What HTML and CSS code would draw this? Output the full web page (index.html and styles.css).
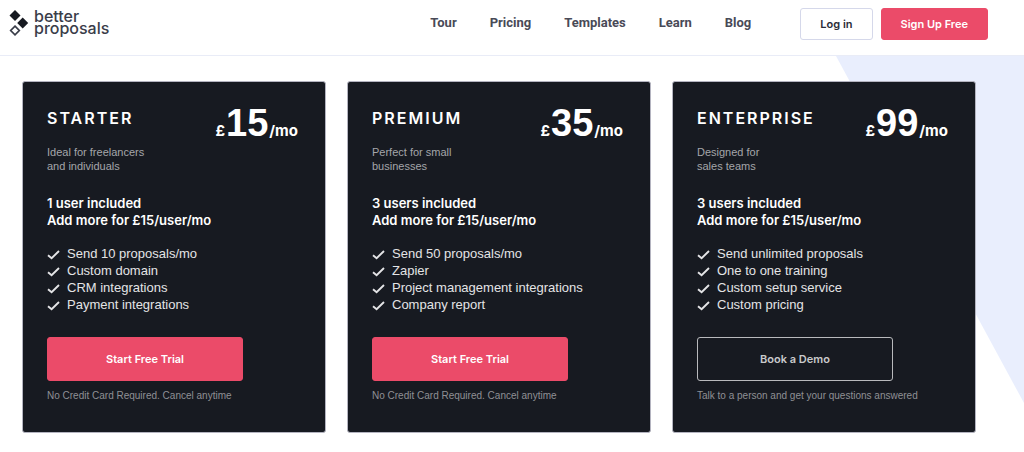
FILE: index.html
```html
<!DOCTYPE html>
<html lang="en">
<head>
<meta charset="utf-8">
<meta name="viewport" content="width=device-width, initial-scale=1">
<title>Better Proposals – Pricing</title>
<link rel="stylesheet" href="styles.css">
</head>
<body>
<svg class="sprite" aria-hidden="true">
  <symbol id="check" viewBox="0 0 13 11"><path d="M1 6.2 4.6 9.2 12 2" fill="none" stroke="currentColor" stroke-width="1.9"/></symbol>
</svg>
<header class="header">
  <a class="logo" href="#" aria-label="Better Proposals">
    <svg class="logo-mark" viewBox="0 0 20 26" aria-hidden="true">
      <path d="M6 0 11.5 5.5 6 11 .5 5.5Z" fill="#171a21"/>
      <path d="M13.7 7.5 19.2 13 13.7 18.5 8.2 13Z" fill="#171a21"/>
      <path d="M6 16.2 10.3 20.5 6 24.8 1.7 20.5Z" fill="none" stroke="#3a3d49" stroke-width="1.7"/>
    </svg>
    <span class="logo-text">better<br>proposals</span>
  </a>
  <nav class="nav">
    <a href="#">Tour</a>
    <a href="#">Pricing</a>
    <a href="#">Templates</a>
    <a href="#">Learn</a>
    <a href="#">Blog</a>
  </nav>
  <div class="account">
    <button class="btn btn-login" type="button">Log in</button>
    <button class="btn btn-signup" type="button">Sign Up Free</button>
  </div>
</header>
<main class="pricing">
  <svg class="slant" viewBox="0 0 188 347" aria-hidden="true"><path d="M0 0H188V347Z" fill="#e9eefd"/></svg>
  <section class="card">
    <div class="card-head">
      <h2>STARTER</h2>
      <p class="price"><span>£</span><strong>15</strong><span>/mo</span></p>
    </div>
    <p class="tagline">Ideal for freelancers<br>and individuals</p>
    <p class="users">1 user included<br>Add more for £15/user/mo</p>
    <ul class="features">
      <li><svg class="check"><use href="#check"/></svg>Send 10 proposals/mo</li>
      <li><svg class="check"><use href="#check"/></svg>Custom domain</li>
      <li><svg class="check"><use href="#check"/></svg>CRM integrations</li>
      <li><svg class="check"><use href="#check"/></svg>Payment integrations</li>
    </ul>
    <button class="btn cta" type="button">Start Free Trial</button>
    <p class="note">No Credit Card Required. Cancel anytime</p>
  </section>
  <section class="card">
    <div class="card-head">
      <h2>PREMIUM</h2>
      <p class="price"><span>£</span><strong>35</strong><span>/mo</span></p>
    </div>
    <p class="tagline">Perfect for small<br>businesses</p>
    <p class="users">3 users included<br>Add more for £15/user/mo</p>
    <ul class="features">
      <li><svg class="check"><use href="#check"/></svg>Send 50 proposals/mo</li>
      <li><svg class="check"><use href="#check"/></svg>Zapier</li>
      <li><svg class="check"><use href="#check"/></svg>Project management integrations</li>
      <li><svg class="check"><use href="#check"/></svg>Company report</li>
    </ul>
    <button class="btn cta" type="button">Start Free Trial</button>
    <p class="note">No Credit Card Required. Cancel anytime</p>
  </section>
  <section class="card">
    <div class="card-head">
      <h2>ENTERPRISE</h2>
      <p class="price"><span>£</span><strong>99</strong><span>/mo</span></p>
    </div>
    <p class="tagline">Designed for<br>sales teams</p>
    <p class="users">3 users included<br>Add more for £15/user/mo</p>
    <ul class="features">
      <li><svg class="check"><use href="#check"/></svg>Send unlimited proposals</li>
      <li><svg class="check"><use href="#check"/></svg>One to one training</li>
      <li><svg class="check"><use href="#check"/></svg>Custom setup service</li>
      <li><svg class="check"><use href="#check"/></svg>Custom pricing</li>
    </ul>
    <button class="btn cta cta-outline" type="button">Book a Demo</button>
    <p class="note">Talk to a person and get your questions answered</p>
  </section>
</main>
</body>
</html>
```
FILE: styles.css
```css
* { box-sizing: border-box; }
body {
  margin: 0;
  background: #fff;
  color: #fff;
  font-family: Inter, "Liberation Sans", sans-serif;
}
h2, p, ul { margin: 0; padding: 0; }
a { color: inherit; text-decoration: none; }
.sprite { position: absolute; width: 0; height: 0; }

.header {
  display: flex;
  align-items: flex-start;
  padding: 8px 36px 15px 9px;
  border-bottom: 1px solid #e9ecf7;
}
.logo { display: flex; gap: 5px; padding-top: 2px; margin-right: auto; }
.logo-mark { width: 20px; height: 26px; }
.logo-text { font: 500 16px/12px Inter, sans-serif; color: #3a3d49; }
.nav {
  display: flex;
  gap: 33px;
  font: 700 13px/30px Roboto, sans-serif;
  color: #494a57;
}
.account { display: flex; gap: 8px; margin-left: 49px; }
.btn {
  border: 1px solid #eb4b69;
  border-radius: 3px;
  background: #eb4b69;
  color: #fff;
  font: 600 11px/16px Inter, sans-serif;
}
.account .btn { padding: 7px 19px; }
.account .btn-login { background: #fff; border-color: #d5d8ea; color: #2b2d38; }

.pricing {
  position: relative;
  display: grid;
  grid-template-columns: repeat(3, 1fr);
  gap: 21px;
  padding: 25px 48px 19px 22px;
}
.slant { position: absolute; top: 0; right: 0; width: 188px; height: 347px; }
.card {
  position: relative;
  padding: 24px 27px 29px 24px;
  border: 1px solid #b4b4c0;
  border-radius: 3px;
  background: #171a21;
}
.card-head { display: flex; justify-content: space-between; align-items: flex-start; height: 36px; }
.card h2 { font-size: 16px; font-weight: 600; line-height: 24px; letter-spacing: 2px; }
.price {
  display: flex;
  align-items: baseline;
  gap: 1px;
  font: 700 15px/34px Inter, sans-serif;
}
.price strong { font: 700 38px/34px "Liberation Sans", sans-serif; }
.tagline { padding-top: 3px; color: #a5a6aa; font: 11px/14px "Liberation Sans", sans-serif; }
.users { margin-top: 22px; font-size: 13px; font-weight: 600; line-height: 17px; }
.features { margin-top: 16px; list-style: none; color: #e4e4e6; font: 13px/17px "Liberation Sans", sans-serif; }
.features li { display: flex; gap: 7px; }
.check { width: 13px; height: 11px; margin-top: 4px; }
.cta { display: block; width: 196px; margin-top: 24px; padding: 13px; }
.cta-outline { background: transparent; border-color: #b9babd; color: #c9cacc; }
.note { margin-top: 8px; color: #8f9095; font: 10px/14px "Liberation Sans", sans-serif; }
```
